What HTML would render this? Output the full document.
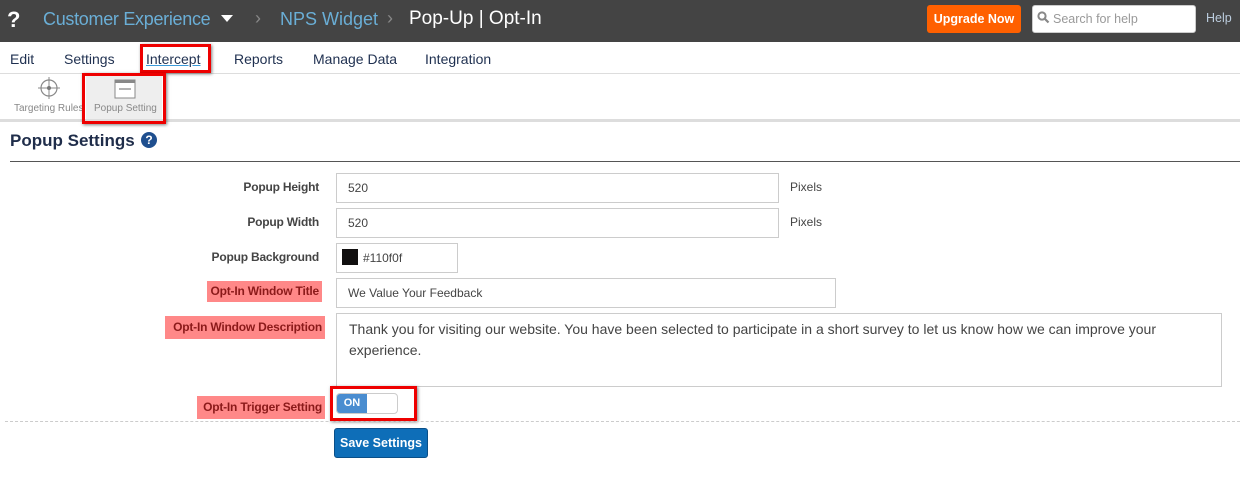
<!DOCTYPE html>
<html><head><style>
*{box-sizing:border-box;margin:0;padding:0}
body{width:1240px;height:483px;background:#fff;font-family:"Liberation Sans",sans-serif;position:relative;overflow:hidden;color:#333}
.a{position:absolute;white-space:nowrap}
.top{left:0;top:0;width:1240px;height:42px;background:#444}
.nav{font-size:14px;color:#1f3050;top:51px}
.lbl{font-size:12px;font-weight:bold;color:#444;text-align:right;right:918px;line-height:21px;padding:0 3px;letter-spacing:-0.2px}
.hl{background:#f88;color:#8b1a1a}
.inp{border:1px solid #ccc;background:#fff;font-size:12px;color:#444;padding-left:11px;line-height:28px}
.red{border:3px solid #e00;box-shadow:1px 1px 3px rgba(0,0,0,.5)}
.px{font-size:12px;color:#444;left:790px}
</style></head><body>
<div class="a top"></div>
<div class="a" style="left:7px;top:7px;font-size:22px;font-weight:bold;color:#fff">?</div>
<div class="a" style="left:43px;top:9px;font-size:18px;color:#6aaed6;letter-spacing:-0.3px">Customer Experience</div>
<div class="a" style="left:221px;top:15px;width:0;height:0;border-left:6px solid transparent;border-right:6px solid transparent;border-top:7px solid #fff"></div>
<div class="a" style="left:255px;top:8px;font-size:18px;color:#888">›</div>
<div class="a" style="left:280px;top:9px;font-size:18px;color:#6aaed6">NPS Widget</div>
<div class="a" style="left:387px;top:8px;font-size:18px;color:#888">›</div>
<div class="a" style="left:409px;top:8px;font-size:19px;color:#fff">Pop-Up | Opt-In</div>
<div class="a" style="left:927px;top:5px;width:94px;height:28px;background:#ff6000;border-radius:3px;color:#fff;font-size:12.5px;font-weight:bold;text-align:center;line-height:28px">Upgrade Now</div>
<div class="a" style="left:1032px;top:5px;width:164px;height:28px;background:#fff;border-radius:3px;border:1px solid #ccc;font-size:12.5px;color:#999;line-height:26px;padding-left:20px">Search for help</div>
<svg class="a" style="left:1037px;top:11px" width="13" height="13"><circle cx="5" cy="5" r="3.6" fill="none" stroke="#888" stroke-width="2"/><line x1="8" y1="8" x2="11.5" y2="11.5" stroke="#888" stroke-width="2.2"/></svg>
<div class="a" style="left:1206px;top:11px;font-size:12.5px;color:#bcd">Help</div>

<div class="a nav" style="left:10px">Edit</div>
<div class="a nav" style="left:64px">Settings</div>
<div class="a nav" style="left:146px;text-decoration:underline;text-decoration-color:#3a9ad9">Intercept</div>
<div class="a nav" style="left:234px">Reports</div>
<div class="a nav" style="left:313px">Manage Data</div>
<div class="a nav" style="left:425px">Integration</div>
<div class="a" style="left:0;top:73px;width:1240px;height:1px;background:#ddd"></div>
<div class="a red" style="left:140px;top:44px;width:71px;height:29px"></div>

<div class="a" style="left:0;top:119px;width:1240px;height:3px;background:#ddd"></div>
<svg class="a" style="left:37px;top:76px" width="24" height="24"><circle cx="12" cy="12" r="8" fill="none" stroke="#888" stroke-width="1.2"/><line x1="12" y1="1" x2="12" y2="23" stroke="#888"/><line x1="1" y1="12" x2="23" y2="12" stroke="#888"/><circle cx="12" cy="12" r="2" fill="#777"/></svg>
<div class="a" style="left:14px;top:103px;font-size:10px;color:#888">Targeting Rules</div>
<div class="a" style="left:86px;top:76px;width:76px;height:43px;background:#eee"></div>
<svg class="a" style="left:114px;top:79px" width="22" height="20"><rect x="1" y="1" width="20" height="18" fill="#fff" stroke="#888"/><rect x="1" y="1" width="20" height="3" fill="#888"/><line x1="5" y1="10" x2="17" y2="10" stroke="#999" stroke-width="1.5"/></svg>
<div class="a" style="left:94px;top:103px;font-size:10px;color:#888">Popup Setting</div>
<div class="a red" style="left:82px;top:73px;width:84px;height:51px"></div>

<div class="a" style="left:10px;top:131px;font-size:17px;font-weight:bold;color:#1f2d4a">Popup Settings</div>
<div class="a" style="left:141px;top:132px;width:16px;height:16px;border-radius:50%;background:#1f4f8f;color:#fff;font-size:12px;font-weight:bold;text-align:center;line-height:16px">?</div>
<div class="a" style="left:10px;top:161px;width:1230px;height:1px;background:#555"></div>

<div class="a lbl" style="top:177px">Popup Height</div>
<div class="a inp" style="left:336px;top:173px;width:443px;height:30px">520</div>
<div class="a px" style="top:180px">Pixels</div>
<div class="a lbl" style="top:212px">Popup Width</div>
<div class="a inp" style="left:336px;top:208px;width:443px;height:30px">520</div>
<div class="a px" style="top:215px">Pixels</div>
<div class="a lbl" style="top:247px">Popup Background</div>
<div class="a inp" style="left:336px;top:243px;width:122px;height:30px;padding-left:26px">#110f0f</div>
<div class="a" style="left:342px;top:249px;width:16px;height:16px;background:#110f0f"></div>
<div class="a lbl hl" style="top:281px">Opt-In Window Title</div>
<div class="a inp" style="left:336px;top:278px;width:500px;height:30px">We Value Your Feedback</div>
<div class="a lbl hl" style="top:316px;right:915px;padding:1px 3px 1px 8px">Opt-In Window Description</div>
<div class="a inp" style="left:336px;top:313px;width:886px;height:74px;font-size:14px;line-height:21px;padding:5px 12px;white-space:normal">Thank you for visiting our website. You have been selected to participate in a short survey to let us know how we can improve your experience.</div>
<div class="a lbl hl" style="top:396px;right:915px;padding:1px 3px 1px 6px">Opt-In Trigger Setting</div>
<div class="a" style="left:336px;top:393px;width:62px;height:21px;border:1px solid #ccc;border-radius:4px;overflow:hidden;background:#fff"><div style="width:30px;height:100%;background:#4a8dd0;color:#fff;font-size:11px;font-weight:bold;text-align:center;line-height:19px">ON</div></div>
<div class="a red" style="left:330px;top:386px;width:87px;height:35px"></div>
<div class="a" style="left:5px;top:421px;width:1235px;border-top:1px dashed #ccc"></div>
<div class="a" style="left:334px;top:428px;width:94px;height:30px;background:#0e6eb8;border:1px solid #0a4f88;border-radius:3px;color:#fff;font-size:12.5px;font-weight:bold;text-align:center;line-height:28px">Save Settings</div>
</body></html>
